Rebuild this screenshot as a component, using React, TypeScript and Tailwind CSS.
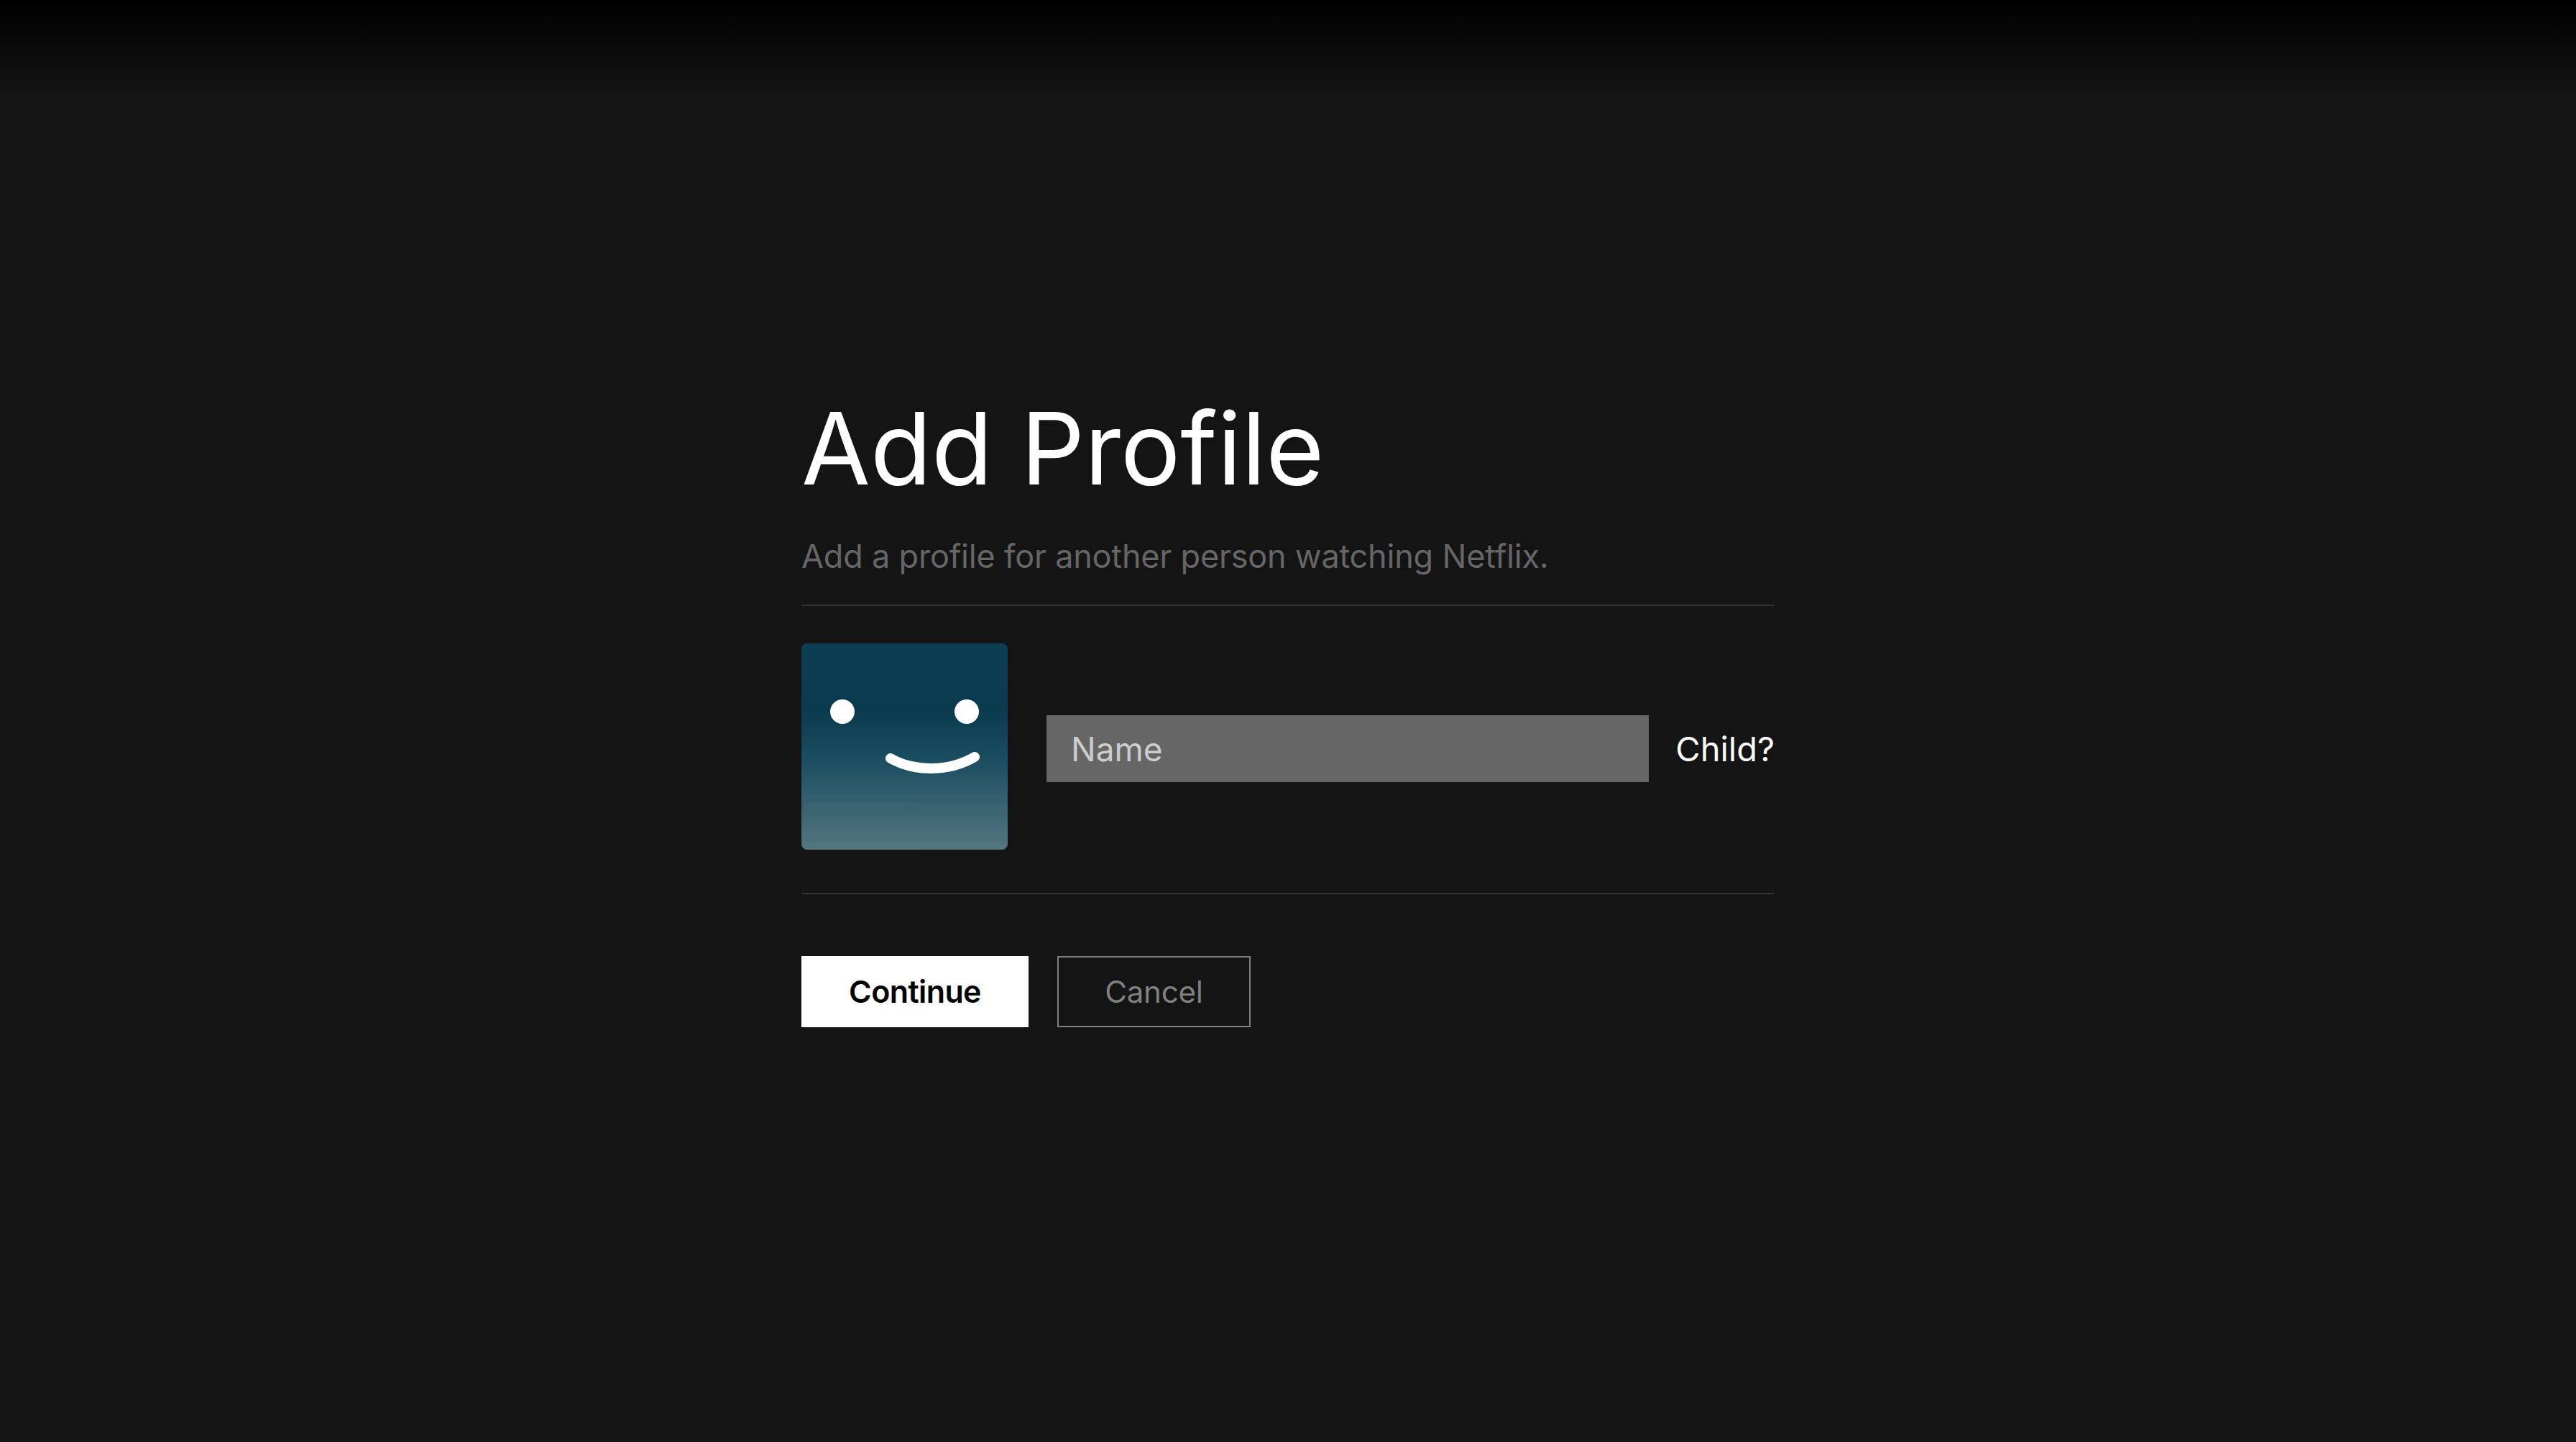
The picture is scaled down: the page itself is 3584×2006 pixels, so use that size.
export default function App() {
    return (
        <div className="min-h-screen bg-[#141414] bg-[linear-gradient(to_bottom,#000000_0px,#141414_130px)] font-['Inter','Liberation_Sans',sans-serif] pt-[534px]">
            <div className="w-[1354px] mx-auto">
                <h1 className="text-[139px] leading-[180px] font-normal text-white">Add Profile</h1>
                <h2 className="mt-[30px] text-[45px] leading-[60px] tracking-[-0.2px] font-normal text-[#666666]">
                    Add a profile for another person watching Netflix.
                </h2>

                <div className="mt-[37px] border-y-2 border-[#333333] pt-[52px] pb-[60px] flex items-center">
                    <div className="w-[287px] h-[287px] shrink-0 rounded-[8px] overflow-hidden bg-[linear-gradient(to_bottom,#0c3e51_0%,#0a3a4d_32%,#1c4f61_58%,#54767f_100%)]">
                        <svg viewBox="0 0 287 287" className="w-full h-full">
                            <circle cx="57" cy="95" r="17" fill="#fff" />
                            <circle cx="230" cy="95" r="17" fill="#fff" />
                            <path d="M124 160 C158 179 205 179 241 158" fill="none" stroke="#fff" strokeWidth="14" strokeLinecap="round" />
                        </svg>
                    </div>

                    <div className="ml-[54px] mt-[6px] flex items-center flex-1">
                        <input
                            type="text"
                            placeholder="Name"
                            className="w-[838px] h-[93px] bg-[#666666] px-[34px] text-[46px] text-white placeholder:text-[#cccccc] outline-none"
                        />
                        <label className="ml-auto text-[47px] leading-[60px] text-white">Child?</label>
                    </div>
                </div>

                <div className="mt-[86px] flex items-center gap-[40px]">
                    <button className="w-[316px] h-[99px] bg-white text-black text-[43px] font-semibold tracking-[-0.6px]">Continue</button>
                    <button className="w-[269px] h-[99px] border-2 border-[#808080] text-[#808080] text-[42px] tracking-[-0.2px]">Cancel</button>
                </div>
            </div>
        </div>
    );
}
